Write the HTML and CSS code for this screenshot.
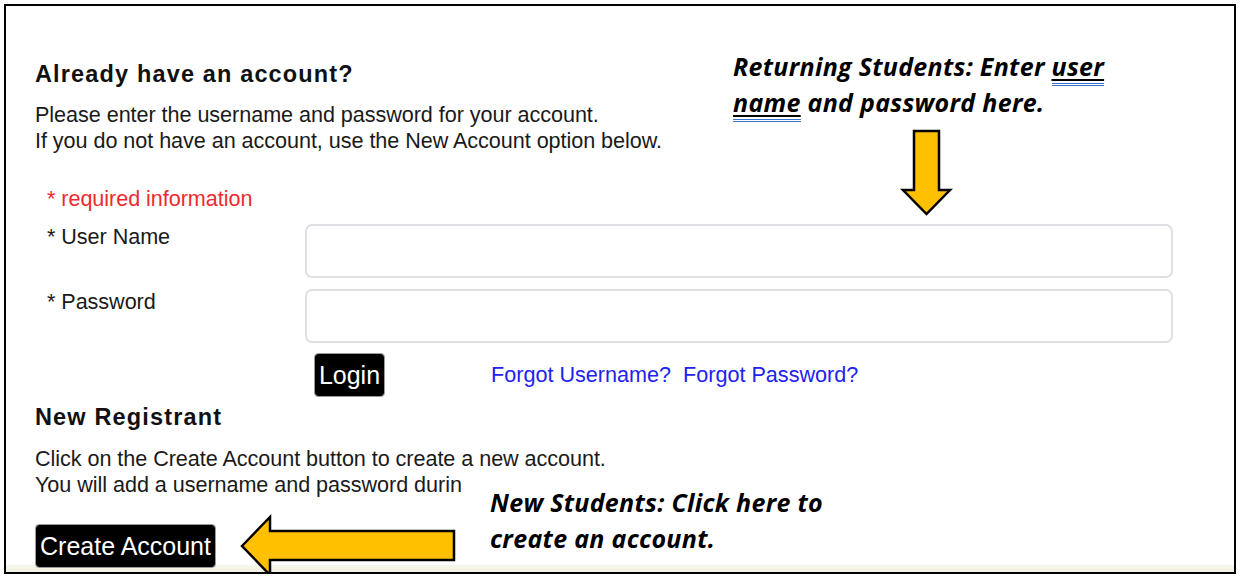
FILE: index.html
```html
<!DOCTYPE html>
<html>
<head>
<meta charset="utf-8">
<link rel="stylesheet" href="styles.css">
</head>
<body>
<div class="frame">
  <section class="login">
    <h2 class="title">Already have an account?</h2>
    <p class="intro">Please enter the username and password for your account.<br>If you do not have an account, use the New Account option below.</p>
    <p class="required">* required information</p>
    <div class="form">
      <label class="label">* User Name</label>
      <div class="input"></div>
      <label class="label">* Password</label>
      <div class="input"></div>
      <div></div>
      <div class="actions">
        <span class="btn btn-login">Login</span>
        <span class="links"><a class="link">Forgot Username?</a>&nbsp; <a class="link">Forgot Password?</a></span>
      </div>
    </div>
  </section>
  <section class="register">
    <h2 class="title title-new">New Registrant</h2>
    <p class="intro">Click on the Create Account button to create a new account.<br>You will add a username and password durin</p>
    <span class="btn btn-create">Create Account</span>
  </section>

  <div class="note note-return">Returning Students: Enter <span class="sq">user</span><br><span class="sq">name</span> and password here.</div>
  <div class="note note-new">New Students: Click here to<br>create an account.</div>

  <svg class="arrow arrow-down" width="54" height="90" viewBox="0 0 54 90">
    <polygon points="14,2 39,2 39,61 50,61 26.5,85 3,61 14,61" fill="#FFC000" stroke="#000" stroke-width="2.5" stroke-linejoin="miter"/>
  </svg>
  <svg class="arrow arrow-left" width="220" height="64" viewBox="0 0 220 64">
    <polygon points="3,31 31,2 31,16 215,16 215,45 31,45 31,60" fill="#FFC000" stroke="#000" stroke-width="2.5" stroke-linejoin="miter"/>
  </svg>
</div>
</body>
</html>
```

FILE: styles.css
```css
html, body {
  margin: 0;
  padding: 0;
  background: #fff;
}

body {
  font-family: "Liberation Sans", Arial, sans-serif;
  color: #111;
}

.frame {
  position: relative;
  box-sizing: border-box;
  margin: 4px 0 0 4px;
  width: 1232px;
  height: 570px;
  border: 2px solid #000;
  padding: 55px 0 0 29px;
  background: linear-gradient(to top, #f3f1e3 0, #f6f5ea 7px, #fff 7px);
}

.title {
  margin: 0;
  font-size: 23.5px;
  line-height: 26px;
  font-weight: bold;
  letter-spacing: 1.15px;
  color: #111;
}

.intro {
  margin: 15px 0 0 0;
  font-size: 21.6px;
  line-height: 26px;
  letter-spacing: -0.05px;
  color: #1a1a1a;
}

.required {
  margin: 32px 0 0 12px;
  font-size: 21.6px;
  line-height: 26px;
  letter-spacing: -0.05px;
  color: #ee2a2f;
}

.form {
  display: grid;
  grid-template-columns: 258px 868px;
  row-gap: 11px;
  margin: 12px 0 0 12px;
}

.label {
  font-size: 21.6px;
  line-height: 26px;
  letter-spacing: -0.05px;
  color: #1a1a1a;
}

.input {
  box-sizing: border-box;
  height: 54px;
  border: 2px solid #dfe0e4;
  border-radius: 7px;
  background: #fff;
}

.actions {
  display: flex;
  align-items: center;
  padding-left: 10px;
}

.btn {
  display: inline-block;
  background: #000;
  color: #fff;
  font-size: 25px;
  line-height: 42px;
  border-radius: 3px;
  outline: 1px solid #9a9a9a;
  letter-spacing: 0;
}

.btn-login {
  width: 69px;
  height: 42px;
  text-align: center;
}

.links {
  margin-left: 107px;
  font-size: 21.6px;
  line-height: 26px;
  letter-spacing: 0;
}

.link {
  color: #2222ee;
}

.register {
  margin-top: 8px;
}

.register .intro {
  margin-top: 16px;
}

.btn-create {
  margin: 27px 0 0 1px;
  width: 179px;
  height: 42px;
  text-align: center;
}

.note {
  position: absolute;
  font-family: "Open Sans", Lato, sans-serif;
  font-style: italic;
  font-weight: bold;
  font-size: 25px;
  line-height: 36px;
  letter-spacing: 0.3px;
  color: #000;
}

.note-return {
  left: 727px;
  top: 42px;
}

.note-new {
  left: 484px;
  top: 478px;
}

.sq {
  text-decoration: underline;
  text-decoration-thickness: 2px;
  text-underline-offset: 3px;
  border-bottom: 3px double #3f6fc6;
}

.arrow {
  position: absolute;
  overflow: visible;
}

.arrow-down {
  left: 894px;
  top: 123px;
}

.arrow-left {
  left: 233px;
  top: 509px;
}
```
